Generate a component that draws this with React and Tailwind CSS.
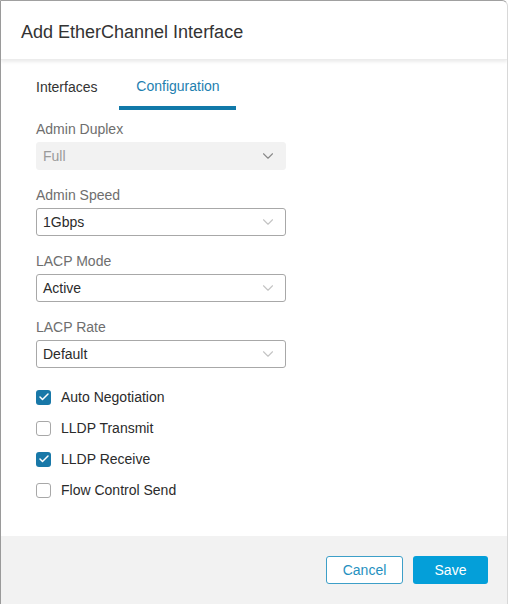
import { Check, ChevronDown } from "lucide-react";

const selects = [
  { label: "Admin Duplex", value: "Full", disabled: true },
  { label: "Admin Speed", value: "1Gbps" },
  { label: "LACP Mode", value: "Active" },
  { label: "LACP Rate", value: "Default" },
];

const checks = [
  { label: "Auto Negotiation", checked: true },
  { label: "LLDP Transmit", checked: false },
  { label: "LLDP Receive", checked: true },
  { label: "Flow Control Send", checked: false },
];

function Select({ label, value, disabled }) {
  return (
    <div className="flex flex-col">
      <span className="text-[14px] leading-[20px] text-[#6e6e6e]">{label}</span>
      <div
        className={`mt-[3px] flex h-[28px] w-[250px] items-center justify-between rounded-[3px] pl-[6px] pr-[8px] text-[14px] ${
          disabled
            ? "border border-[#f2f2f2] bg-[#f2f2f2] text-[#9a9a9a]"
            : "border border-[#a8a8a8] bg-white text-[#2b2b2b]"
        }`}
      >
        <span>{value}</span>
        <ChevronDown
          size={18}
          strokeWidth={1.5}
          className={disabled ? "text-[#8a8a8a]" : "text-[#c4c4c4]"}
        />
      </div>
    </div>
  );
}

export default function App() {
  return (
    <div
      className="flex h-[604px] w-[508px] flex-col overflow-hidden rounded-tr-[6px] border-l border-t border-r border-l-[#9a9a9a] border-t-[#a0a0a0] border-r-[#d8d8d8] bg-white"
      style={{ fontFamily: '"Liberation Sans", Arial, sans-serif' }}
    >
      <div className="flex h-[59px] shrink-0 items-center border-b border-[#ececec] pl-[20px] pt-[5px] text-[18px] text-[#333] shadow-[0_2px_3px_rgba(0,0,0,0.08)]">
        Add EtherChannel Interface
      </div>
      <div className="flex-1 pl-[35px]">
        <div className="mt-[16px] flex text-[14px]">
          <div className="pt-[1px] pr-[22px] text-[#333]">Interfaces</div>
          <div className="flex flex-col items-center">
            <span className="px-[15px] text-[#1e7fb0]">Configuration</span>
            <div className="mt-[9px] h-[4px] w-[117px] bg-[#1179a9]"></div>
          </div>
        </div>
        <div className="mt-[9px] flex flex-col gap-[15px]">
          {selects.map((s) => (
            <Select key={s.label} {...s} />
          ))}
        </div>
        <div className="mt-[20px] flex flex-col gap-[13px]">
          {checks.map((c) => (
            <div key={c.label} className="flex items-center gap-[10px]">
              <span
                className={`flex h-[15px] w-[15px] items-center justify-center rounded-[3px] ${
                  c.checked
                    ? "bg-[#1878a8]"
                    : "border border-[#a8a8a8] bg-white"
                }`}
              >
                {c.checked && <Check size={12} strokeWidth={3} className="text-white" />}
              </span>
              <span className="text-[14px] leading-[18px] text-[#2b2b2b]">{c.label}</span>
            </div>
          ))}
        </div>
      </div>
      <div className="flex h-[68px] shrink-0 items-center justify-end gap-[10px] bg-[#f2f2f2] pr-[19px]">
        <button className="h-[28px] w-[77px] rounded-[3px] border border-[#3d9fc8] bg-white text-[14px] text-[#2590c0]">
          Cancel
        </button>
        <button className="h-[28px] w-[75px] rounded-[3px] bg-[#049fd9] text-[14px] text-white">
          Save
        </button>
      </div>
    </div>
  );
}
